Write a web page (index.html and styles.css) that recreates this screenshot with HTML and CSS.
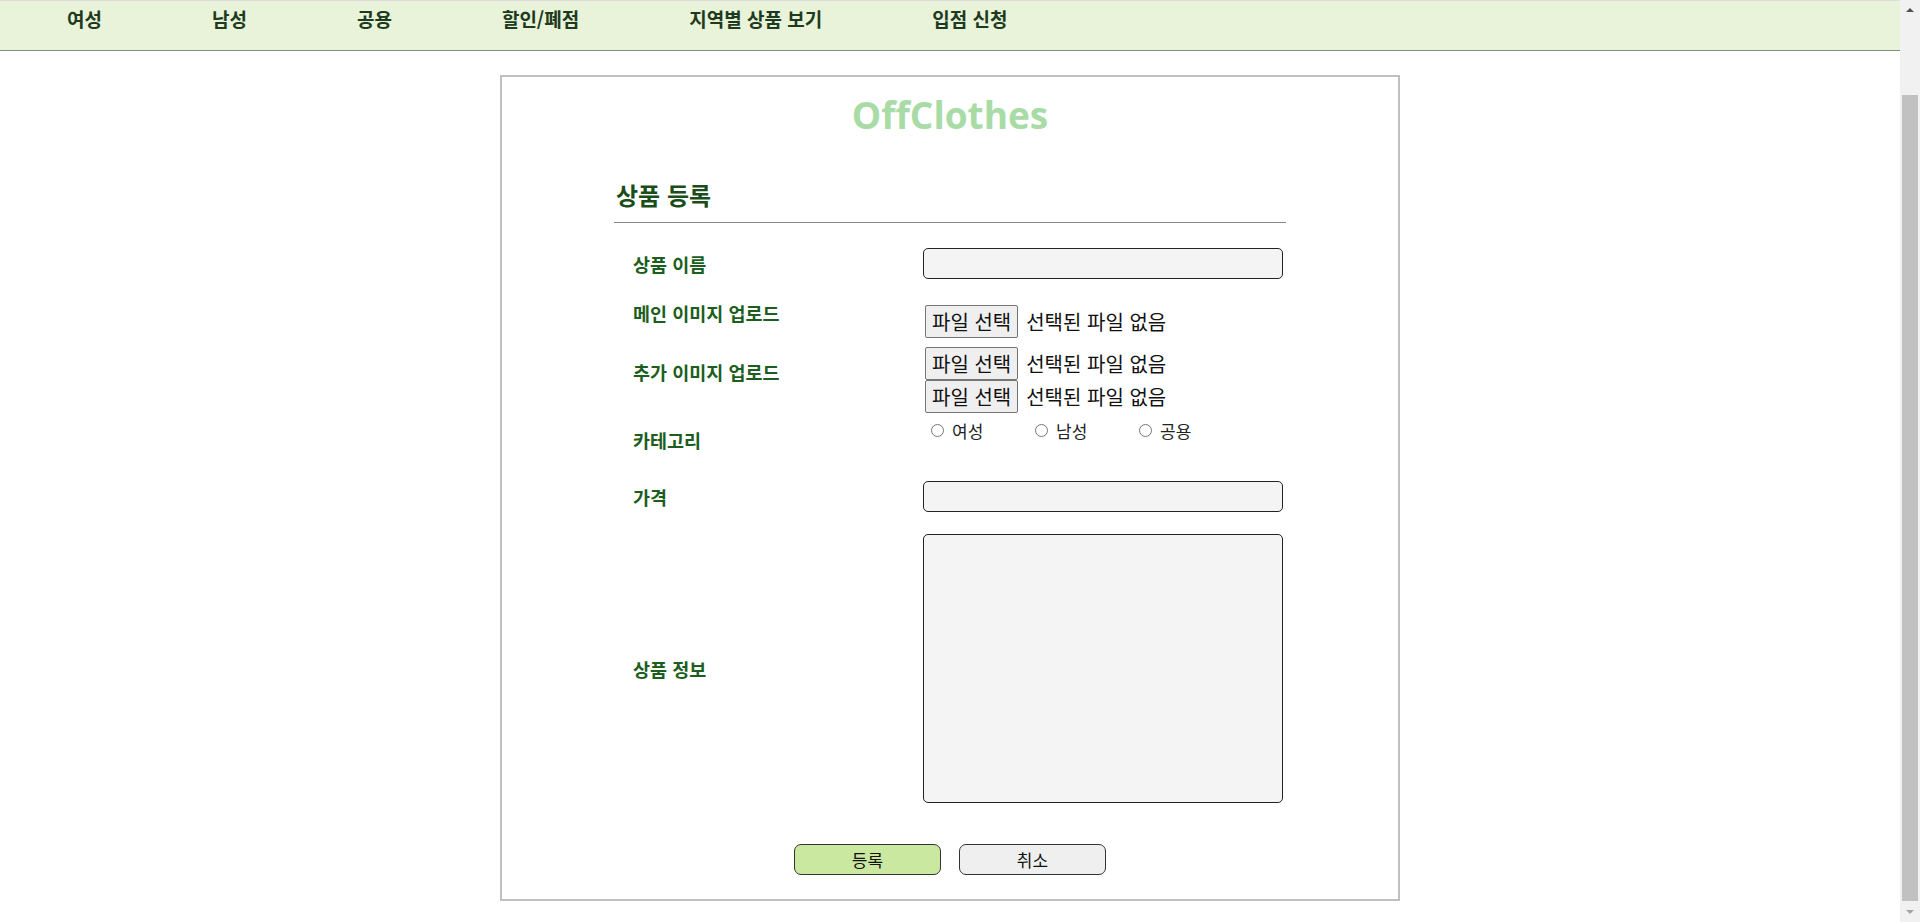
FILE: index.html
```html
<!DOCTYPE html>
<html lang="ko">
<head>
    <meta charset="UTF-8">
    <meta name="viewport" content="width=device-width, initial-scale=1.0">
    <title>OffClothes - 상품 등록</title>
    <link rel="stylesheet" href="styles.css">
</head>
<body>

<div class="page">

    <div class="navbar">
        <a href="#">여성</a>
        <a href="#">남성</a>
        <a href="#">공용</a>
        <a href="#">할인/폐점</a>
        <a href="#">지역별 상품 보기</a>
        <a href="#">입점 신청</a>
    </div>

    <div class="container">
        <h1 class="logo">OffClothes</h1>

        <div class="register">
            <h2>상품 등록</h2>

            <form class="register-form" onsubmit="return false;">
                <div class="form-row row-name">
                    <label class="form-label" for="name">상품 이름</label>
                    <input type="text" id="name" class="text-input">
                </div>

                <div class="form-row row-main">
                    <label class="form-label">메인 이미지 업로드</label>
                    <div class="form-value">
                        <label class="file-input">
                            <input type="file" name="mainImage">
                            <span class="file-btn">파일 선택</span>
                            <span class="file-name">선택된 파일 없음</span>
                        </label>
                    </div>
                </div>

                <div class="form-row row-extra">
                    <label class="form-label">추가 이미지 업로드</label>
                    <div class="form-value">
                        <label class="file-input">
                            <input type="file" name="subImage1">
                            <span class="file-btn">파일 선택</span>
                            <span class="file-name">선택된 파일 없음</span>
                        </label>
                        <label class="file-input">
                            <input type="file" name="subImage2">
                            <span class="file-btn">파일 선택</span>
                            <span class="file-name">선택된 파일 없음</span>
                        </label>
                    </div>
                </div>

                <div class="form-row row-category">
                    <label class="form-label">카테고리</label>
                    <div class="radio-group">
                        <label><input type="radio" name="category" value="women">여성</label>
                        <label><input type="radio" name="category" value="men">남성</label>
                        <label><input type="radio" name="category" value="unisex">공용</label>
                    </div>
                </div>

                <div class="form-row row-price">
                    <label class="form-label" for="price">가격</label>
                    <input type="text" id="price" class="text-input">
                </div>

                <div class="form-row row-info">
                    <label class="form-label" for="info">상품 정보</label>
                    <textarea id="info" class="text-area"></textarea>
                </div>

                <div class="form-buttons">
                    <button type="submit" class="btn btn-submit">등록</button>
                    <button type="button" class="btn btn-cancel">취소</button>
                </div>
            </form>
        </div>
    </div>

</div>

<!-- window scrollbar as it appears in the screenshot -->
<div class="scrollbar" aria-hidden="true">
    <div class="scroll-btn scroll-up"></div>
    <div class="scroll-thumb"></div>
    <div class="scroll-btn scroll-down"></div>
</div>

</body>
</html>
```

FILE: styles.css
```css
body {
    font-family: "Noto Sans CJK KR", sans-serif;
    margin: 0;
    padding: 0;
    display: flex;
    height: 100vh;
    overflow: hidden;
    background: #fff;
    color: #111;
}

.page {
    flex: 1;
    min-width: 0;
}

.scrollbar {
    width: 20px;
    display: flex;
    flex-direction: column;
    background: #f1f1f1;
}

.scroll-btn {
    height: 20px;
    display: flex;
    align-items: center;
    justify-content: center;
}

.scroll-btn::before {
    content: "";
    border-left: 4px solid transparent;
    border-right: 4px solid transparent;
}

.scroll-up::before {
    border-bottom: 4px solid #505050;
}

.scroll-down::before {
    border-top: 4px solid #a3a3a3;
}

.scroll-thumb {
    flex: 1;
    margin: 75px 2px 1px;
    background: #c1c1c1;
}

.navbar {
    display: flex;
    gap: 110px;
    background: #e8f3d9;
    border-top: 1px solid #dcdcdc;
    border-bottom: 1px solid #7b9079;
    padding: 6px 0 19px 67px;
}

.navbar a {
    text-decoration: none;
    color: #203a20;
    font-size: 19px;
    font-weight: bold;
    line-height: 24px;
}

.container {
    box-sizing: border-box;
    width: 900px;
    margin: 24px auto 0;
    padding: 13px 0 24px;
    border: 2px solid #c0c0c0;
}

.logo {
    margin: 0;
    text-align: center;
    font-family: "Open Sans", "Noto Sans CJK KR", sans-serif;
    font-size: 37px;
    font-weight: bold;
    line-height: 50px;
    color: #a9dba6;
}

.register {
    width: 672px;
    margin: 0 auto;
}

.register h2 {
    margin: 40px 0 0;
    padding: 0 0 12px 2px;
    font-size: 24px;
    line-height: 30px;
    color: #1a4d1a;
    border-bottom: 1px solid #888;
}

.form-row {
    display: flex;
    align-items: center;
}

.form-label {
    box-sizing: border-box;
    width: 309px;
    padding-left: 19px;
    font-size: 18.5px;
    font-weight: bold;
    line-height: 24px;
    color: #1b5e20;
}

.text-input,
.text-area {
    box-sizing: border-box;
    width: 360px;
    margin: 0;
    border: 1px solid #222;
    border-radius: 5px;
    background: #f4f4f4;
    font-family: inherit;
}

.text-input {
    height: 31px;
}

.text-area {
    height: 269px;
    resize: none;
}

.row-name {
    margin-top: 25px;
}

.row-main {
    margin-top: 22px;
    align-items: flex-start;
}

.row-main .form-value {
    margin-top: 4px;
}

.row-extra {
    margin-top: 9px;
    align-items: flex-start;
}

.row-extra .form-label {
    margin-top: 13px;
}

.row-category {
    margin-top: 7px;
    align-items: flex-start;
}

.row-category .form-label {
    margin-top: 8px;
}

.row-price {
    margin-top: 29px;
}

.row-info {
    margin-top: 22px;
}

/* file inputs drawn by hand so the labels stay in Korean */
.file-input {
    display: flex;
    align-items: center;
    height: 33px;
    font-size: 20px;
    color: #111;
    cursor: pointer;
}

.file-input input {
    display: none;
}

.file-btn {
    box-sizing: border-box;
    height: 33px;
    margin: 0 8px 0 2px;
    padding: 0 6px;
    border: 1px solid #767676;
    border-radius: 2px;
    background: #efefef;
    line-height: 31px;
}

.radio-group {
    display: flex;
    align-items: center;
    height: 20px;
    padding-left: 3px;
    font-size: 17px;
    color: #222;
}

.radio-group label {
    display: flex;
    align-items: center;
    width: 104px;
}

.radio-group input {
    width: 13px;
    height: 13px;
    margin: 0 8px 0 5px;
}

.form-buttons {
    display: flex;
    justify-content: center;
    gap: 18px;
    margin-top: 41px;
}

.btn {
    box-sizing: border-box;
    width: 147px;
    height: 31px;
    border: 1px solid #333;
    border-radius: 7px;
    font-family: inherit;
    font-size: 17px;
    color: #111;
    cursor: pointer;
}

.btn-submit {
    background: #cbe8a0;
}

.btn-cancel {
    background: #efefef;
}
```
